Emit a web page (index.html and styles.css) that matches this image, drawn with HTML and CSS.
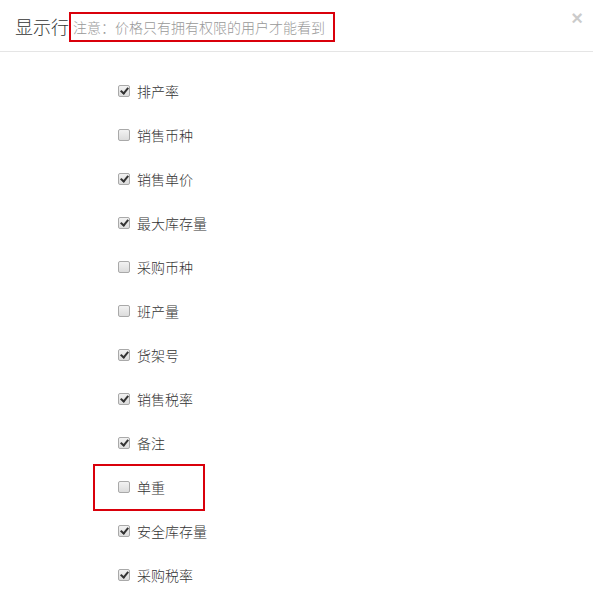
FILE: index.html
```html
<!DOCTYPE html>
<html>
<head>
<meta charset="utf-8">
<link rel="stylesheet" href="styles.css">
</head>
<body>
<div class="modal">
  <div class="modal-header">
    <h4 class="title">显示行</h4>
    <span class="note">注意：价格只有拥有权限的用户才能看到</span>
    <span class="close">×</span>
  </div>
  <div class="modal-body">
    <div class="row"><span class="cb on"></span><span class="label">排产率</span></div>
    <div class="row"><span class="cb"></span><span class="label">销售币种</span></div>
    <div class="row"><span class="cb on"></span><span class="label">销售单价</span></div>
    <div class="row"><span class="cb on"></span><span class="label">最大库存量</span></div>
    <div class="row"><span class="cb"></span><span class="label">采购币种</span></div>
    <div class="row"><span class="cb"></span><span class="label">班产量</span></div>
    <div class="row"><span class="cb on"></span><span class="label">货架号</span></div>
    <div class="row"><span class="cb on"></span><span class="label">销售税率</span></div>
    <div class="row"><span class="cb on"></span><span class="label">备注</span></div>
    <div class="row marked"><span class="cb"></span><span class="label">单重</span><span class="mark"></span></div>
    <div class="row"><span class="cb on"></span><span class="label">安全库存量</span></div>
    <div class="row"><span class="cb on"></span><span class="label">采购税率</span></div>
  </div>
</div>
</body>
</html>
```
FILE: styles.css
```css
html, body {
  margin: 0;
  padding: 0;
  background: #fff;
}
body {
  font-family: "Noto Sans CJK SC", "Liberation Sans", sans-serif;
  color: #333;
}
.modal {
  width: 593px;
}
.modal-header {
  height: 51px;
  border-bottom: 1px solid #e5e5e5;
  display: flex;
  align-items: center;
  padding: 0 0 0 15px;
  box-sizing: content-box;
  position: relative;
}
.title {
  margin: 0;
  font-size: 18px;
  font-weight: 300;
  color: #333;
  line-height: 24px;
}
.note {
  margin-left: 0;
  border: 2px solid #d9000b;
  height: 26px;
  padding: 0 8px 0 2px;
  font-size: 14px;
  font-weight: 300;
  color: #999;
  line-height: 26px;
  margin-top: 2px;
}
.close {
  position: absolute;
  right: 10px;
  top: 6px;
  font-size: 20px;
  font-weight: bold;
  color: #000;
  opacity: 0.2;
  font-family: "Liberation Sans", sans-serif;
  line-height: 24px;
}
.modal-body {
  padding: 17px 0 0 118px;
}
.row {
  height: 44px;
  display: flex;
  align-items: center;
  position: relative;
}
.cb {
  width: 10px;
  height: 10px;
  border: 1px solid #a9a9a9;
  border-radius: 2px;
  background: linear-gradient(#f2f2f2, #dcdcdc);
  position: relative;
  margin-right: 7px;
}
.cb.on::after {
  content: "";
  position: absolute;
  left: 3px;
  top: 0px;
  width: 3px;
  height: 6px;
  border: solid #333;
  border-width: 0 2px 2px 0;
  transform: rotate(40deg);
}
.label {
  font-size: 14px;
  font-weight: 300;
  color: #333;
  line-height: 20px;
}
.mark {
  position: absolute;
  left: -25px;
  top: -1px;
  width: 108px;
  height: 43px;
  border: 2px solid #d9000b;
}
```
